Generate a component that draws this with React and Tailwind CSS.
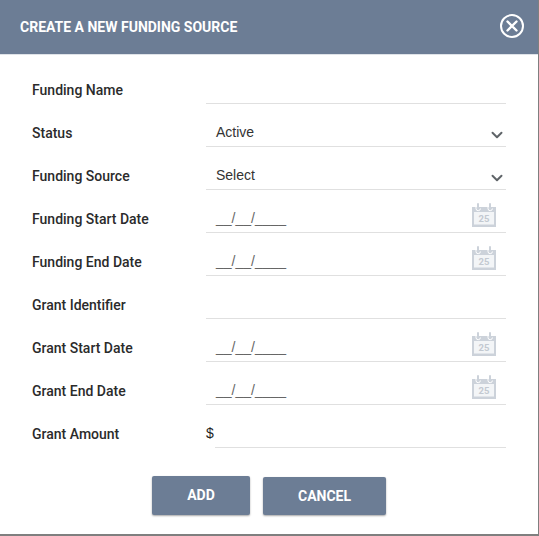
import { ChevronDown } from 'lucide-react';

function CalendarIcon() {
    return (
        <svg width="26" height="26" viewBox="0 0 26 26" className="absolute left-[265px] top-[0px]">
            <path d="M1 4h24v20H1z" fill="#ccd2da" />
            <rect x="3" y="9" width="20" height="12.5" fill="#f3f5f7" />
            <path d="M7 1v6M19 1v6" stroke="#ccd2da" strokeWidth="2" strokeLinecap="round" fill="none" />
            <path d="M5 3v2.5a2.2 2.2 0 0 0 4.4 0M17 3v2.5a2.2 2.2 0 0 0 4.4 0" stroke="#fff" strokeWidth="1" fill="none" />
            <text x="13" y="18.8" textAnchor="middle" fontSize="9.5" fontWeight="700" fill="#c3c9d1" fontFamily="Roboto, sans-serif">25</text>
        </svg>
    );
}

function Row({ label, children, prefix }) {
    return (
        <div className="flex h-[43px] items-start">
            <label className="w-[174px] pt-[6px] text-[14px] leading-[20px] font-medium text-[#2b2b2b]">{label}</label>
            {prefix && <span className="w-[9px] pt-[5px] font-['Liberation_Sans',sans-serif] text-[14px] leading-[20px] text-[#222]">{prefix}</span>}
            <div className="relative h-[30px] flex-1 border-b border-[#e0e0e0]">{children}</div>
        </div>
    );
}

function Value({ children }) {
    return <span className="block pl-[10px] pt-[5px] font-['Liberation_Sans',sans-serif] text-[14px] leading-[20px] text-[#333]">{children}</span>;
}

function SelectValue({ children }) {
    return (
        <>
            <Value>{children}</Value>
            <ChevronDown size={18} strokeWidth={2.6} className="absolute right-0 top-[9px] text-[#5f6468]" />
        </>
    );
}

function DateValue() {
    return (
        <>
            <span className="block pl-[10px] pt-[5px] font-['Liberation_Sans',sans-serif] text-[14px] leading-[20px] text-[#666]">__/__/____</span>
            <CalendarIcon />
        </>
    );
}

export default function App() {
    return (
        <div className="flex h-[536px] w-[539px] flex-col overflow-hidden border-r border-b-2 border-[#7f7f7f] bg-white font-['Roboto',sans-serif]">
            <div className="flex h-[55px] shrink-0 items-center justify-between border-b border-[#dfe3e8] bg-[#6c7d95] pl-[20px] pr-[13px]">
                <h2 className="text-[14px] leading-[20px] font-bold text-white">CREATE A NEW FUNDING SOURCE</h2>
                <svg width="26" height="26" viewBox="0 0 26 26" fill="none" stroke="#fff" strokeWidth="2" className="mb-[3px]">
                    <circle cx="13" cy="13" r="11" />
                    <path d="M8.5 8.5l9 9M17.5 8.5l-9 9" strokeWidth="2.4" strokeLinecap="round" />
                </svg>
            </div>
            <form className="flex flex-1 flex-col pl-[32px] pr-[32px] pt-[19px]">
                <Row label="Funding Name" />
                <Row label="Status"><SelectValue>Active</SelectValue></Row>
                <Row label="Funding Source"><SelectValue>Select</SelectValue></Row>
                <Row label="Funding Start Date"><DateValue /></Row>
                <Row label="Funding End Date"><DateValue /></Row>
                <Row label="Grant Identifier" />
                <Row label="Grant Start Date"><DateValue /></Row>
                <Row label="Grant End Date"><DateValue /></Row>
                <Row label="Grant Amount" prefix="$" />
                <div className="mt-[15px] flex justify-center gap-[13px]">
                    <button type="button" className="h-[39px] w-[98px] rounded-[2px] bg-[#6c7d95] text-[14px] font-bold text-white shadow-[0_1px_2px_rgba(0,0,0,0.35)]">ADD</button>
                    <button type="button" className="h-[38px] w-[123px] self-end rounded-[2px] bg-[#6c7d95] text-[14px] font-bold text-white shadow-[0_1px_2px_rgba(0,0,0,0.35)]">CANCEL</button>
                </div>
            </form>
        </div>
    );
}
